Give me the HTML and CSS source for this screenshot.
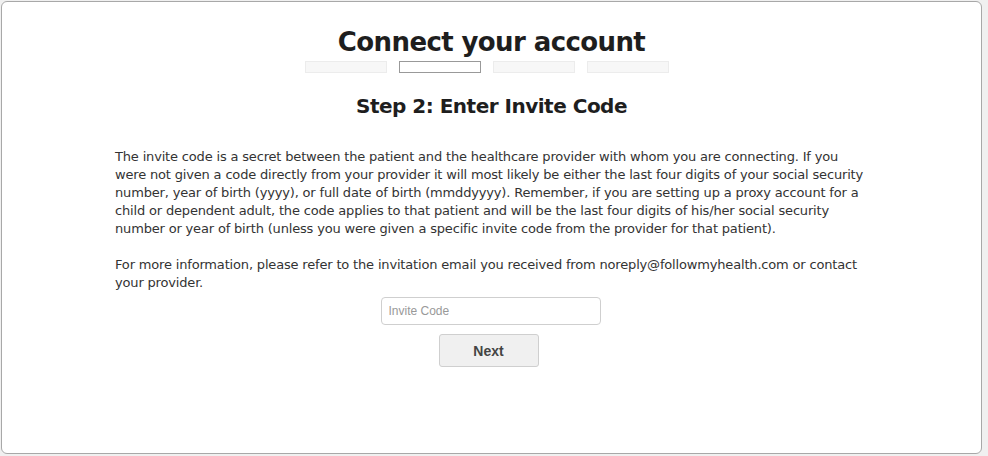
FILE: index.html
```html
<!DOCTYPE html>
<html>
<head>
<meta charset="utf-8">
<link rel="stylesheet" href="styles.css">
</head>
<body>
<div class="card">
  <h1 class="title">Connect your account</h1>
  <div class="steps">
    <span class="step"></span>
    <span class="step active"></span>
    <span class="step"></span>
    <span class="step"></span>
  </div>
  <h2 class="subtitle">Step 2: Enter Invite Code</h2>
  <div class="text">
    <p>The invite code is a secret between the patient and the healthcare provider with whom you are connecting. If you<br>were not given a code directly from your provider it will most likely be either the last four digits of your social security<br>number, year of birth (yyyy), or full date of birth (mmddyyyy). Remember, if you are setting up a proxy account for a<br>child or dependent adult, the code applies to that patient and will be the last four digits of his/her social security<br>number or year of birth (unless you were given a specific invite code from the provider for that patient).</p>
    <p>For more information, please refer to the invitation email you received from noreply@followmyhealth.com or contact<br>your provider.</p>
  </div>
  <div class="form">
    <input class="code" type="text" placeholder="Invite Code">
    <button class="next" type="button">Next</button>
  </div>
</div>
</body>
</html>
```

FILE: styles.css
```css
html, body {
  margin: 0;
  padding: 0;
  background: #f0f0f0;
}
.card {
  box-sizing: border-box;
  width: 981px;
  height: 453px;
  margin: 1px 0 0 1px;
  border: 1px solid #a8a8a8;
  border-radius: 6px;
  background: #fff;
  font-family: "DejaVu Sans", sans-serif;
  color: #222;
  overflow: hidden;
}
.title {
  margin: 22px 0 0;
  text-align: center;
  font-size: 26px;
  line-height: 36px;
  font-weight: bold;
  color: #1e1e1e;
  letter-spacing: -0.6px;
}
.steps {
  display: flex;
  justify-content: center;
  gap: 12px;
  margin: 1px 10px 0 0;
}
.step {
  box-sizing: border-box;
  width: 82px;
  height: 12px;
  border: 1px solid #ececec;
  background: #f7f7f7;
}
.step.active {
  border-color: #999;
  background: #fff;
}
.subtitle {
  margin: 19px 0 0;
  text-align: center;
  font-size: 20px;
  line-height: 28px;
  font-weight: bold;
  color: #1e1e1e;
  letter-spacing: -0.5px;
}
.text {
  width: 753px;
  margin: 28px auto 0;
  font-size: 13px;
  line-height: 18px;
  letter-spacing: -0.17px;
  color: #333;
}
.text p {
  margin: 0 0 18px;
  white-space: nowrap;
}
.text p:last-child {
  margin-bottom: 0;
}
.form {
  display: flex;
  flex-direction: column;
  align-items: center;
  gap: 9px;
  margin-top: 5px;
}
.code {
  box-sizing: border-box;
  width: 220px;
  height: 28px;
  margin: 0 2px 0 0;
  padding: 0 7px;
  border: 1px solid #cfcfcf;
  border-radius: 4px;
  font-family: "Liberation Sans", Arial, sans-serif;
  font-size: 12px;
  color: #555;
  outline: none;
}
.code::placeholder {
  color: #999;
}
.next {
  box-sizing: border-box;
  width: 100px;
  height: 33px;
  margin: 0 6px 0 0;
  border: 1px solid #cfcfcf;
  border-radius: 3px;
  background: #f0f0f0;
  font-family: "Liberation Sans", Arial, sans-serif;
  font-weight: bold;
  font-size: 14px;
  color: #444;
}
```
